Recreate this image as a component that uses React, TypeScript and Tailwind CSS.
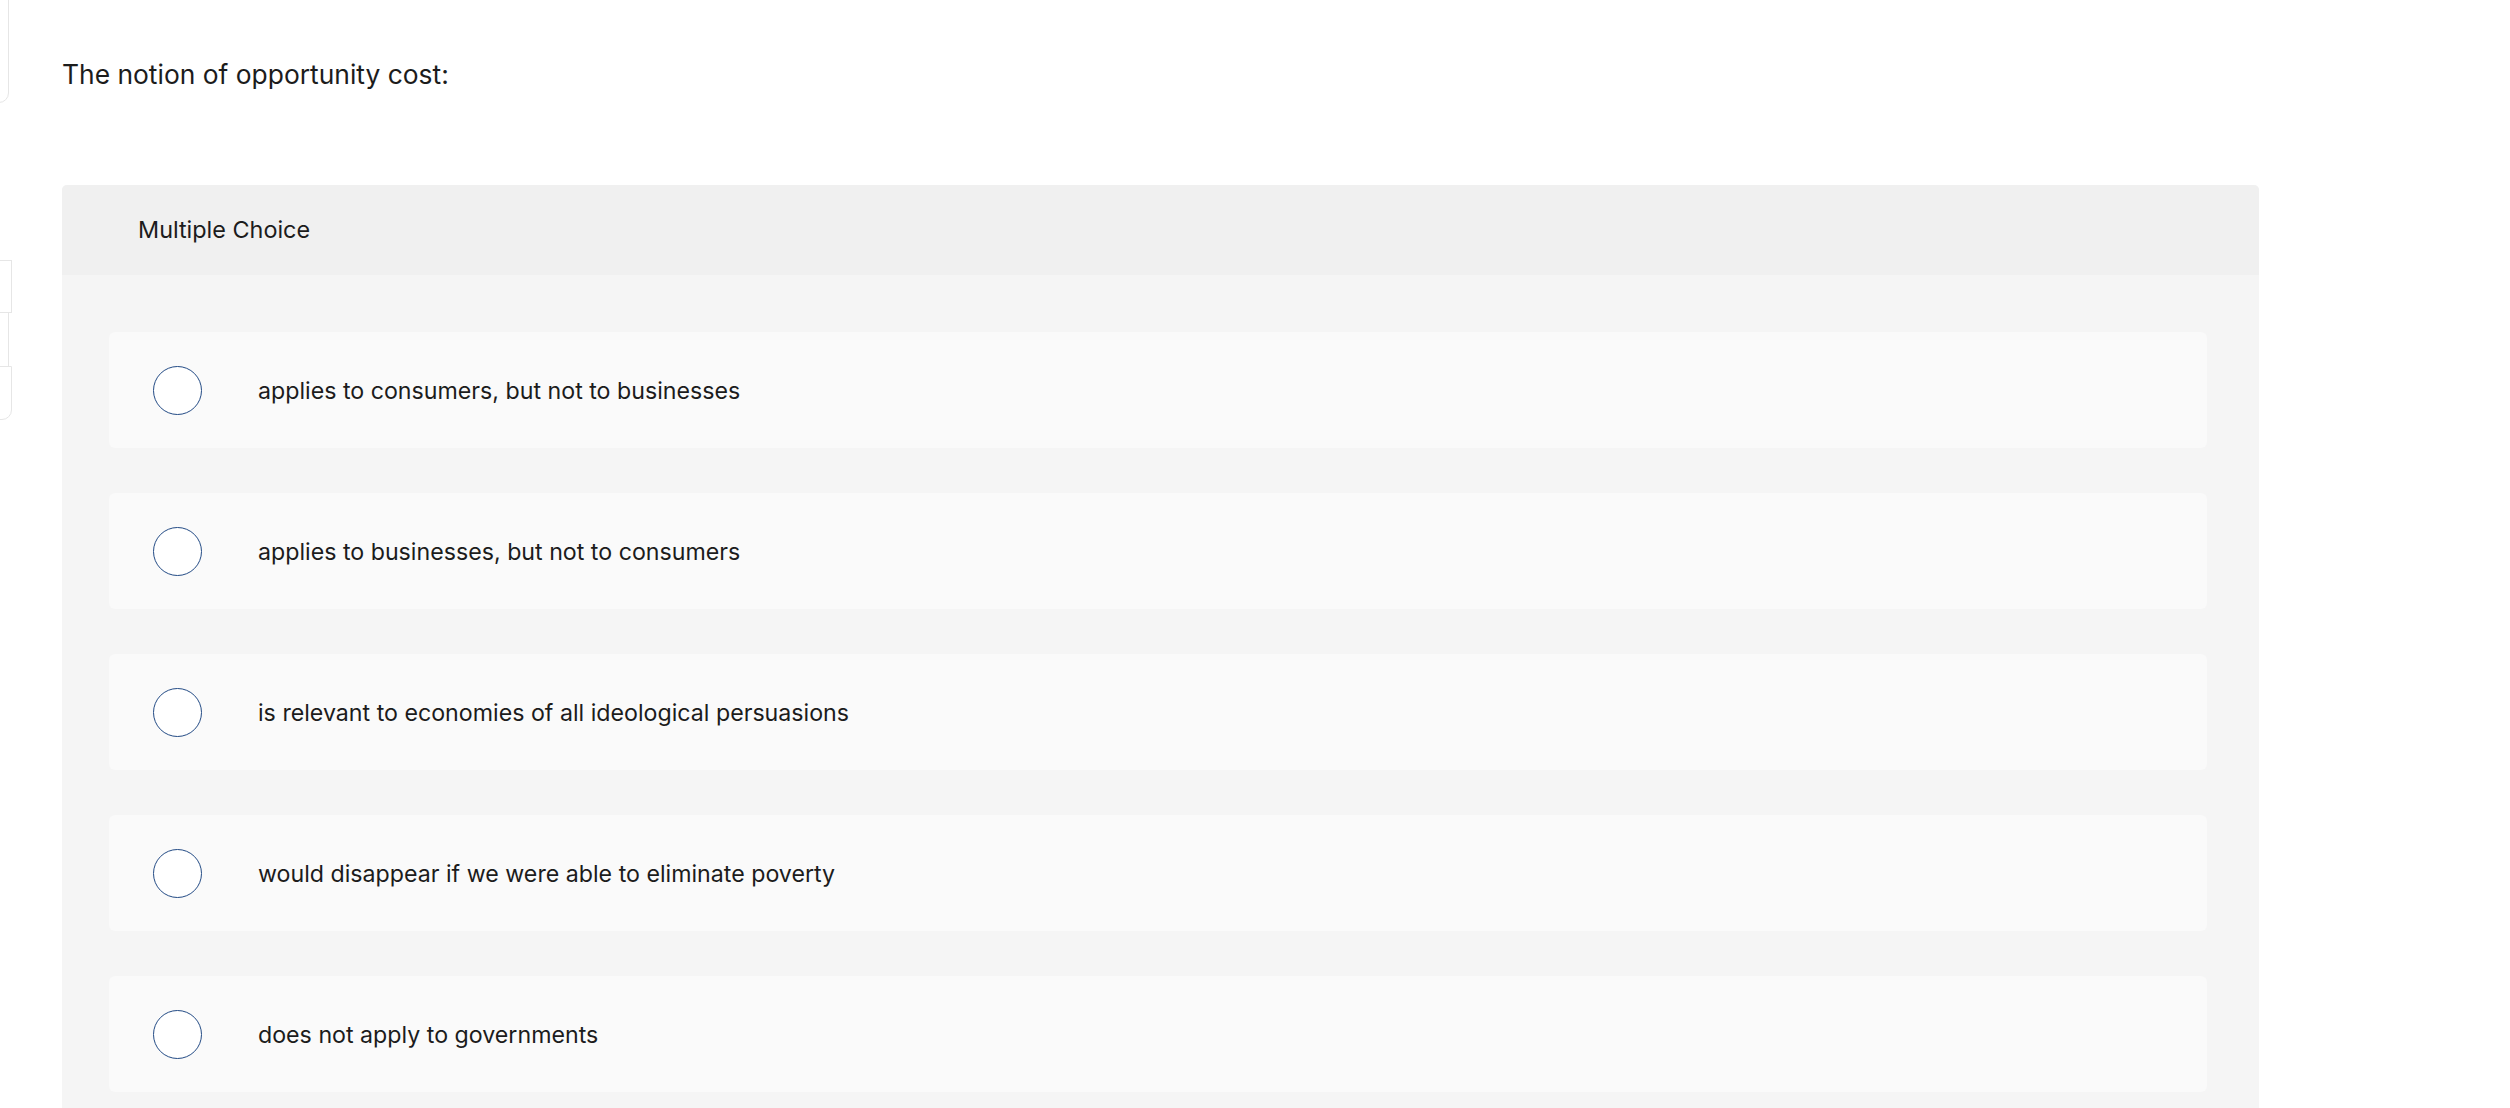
const OPTIONS = [
  'applies to consumers, but not to businesses',
  'applies to businesses, but not to consumers',
  'is relevant to economies of all ideological persuasions',
  'would disappear if we were able to eliminate poverty',
  'does not apply to governments',
];

function Radio() {
  return (
    <span className="block h-[49px] w-[49px] shrink-0 rounded-full border-[1.5px] border-[#234b85] bg-white" />
  );
}

export default function App() {
  return (
    <div className="flex h-[1108px] w-full overflow-hidden bg-white font-['Inter',sans-serif] text-[#1c1c1c]">
      {/* left rail, mostly scrolled off-screen */}
      <div className="w-[13px] shrink-0 overflow-hidden">
        <div className="-ml-[50px] -mt-[10px] h-[113px] w-[59px] rounded-br-[10px] border border-[#e6e6e6]" />
        <div className="mt-[157px]">
          <div className="-ml-[50px] h-[53px] w-[62px] border border-[#e6e6e6]" />
          <div className="-ml-[50px] h-[53px] w-[59px] border-x border-[#e6e6e6]" />
          <div className="-ml-[50px] h-[54px] w-[62px] rounded-br-[10px] border border-[#e6e6e6]" />
        </div>
      </div>

      <div className="ml-[49px] flex w-[2197px] shrink-0 flex-col">
        <h1 className="pt-[56px] text-[26.4px] leading-[36px] font-normal">The notion of opportunity cost:</h1>

        <section className="mt-[93px] flex-1 rounded-t-[5px] bg-[#f5f5f5]">
          <div className="flex h-[90px] items-center rounded-t-[5px] bg-[#f0f0f0] pl-[76px] text-[23.4px]">
            Multiple Choice
          </div>
          <div className="flex flex-col gap-[45px] pt-[57px] pl-[47px] pr-[52px]">
            {OPTIONS.map((o) => (
              <div key={o} className="flex h-[116px] items-center rounded-[6px] bg-[#fafafa] pl-[44px]">
                <Radio />
                <span className="ml-[56px] pt-[2px] text-[23.2px]">{o}</span>
              </div>
            ))}
          </div>
        </section>
      </div>
    </div>
  );
}
